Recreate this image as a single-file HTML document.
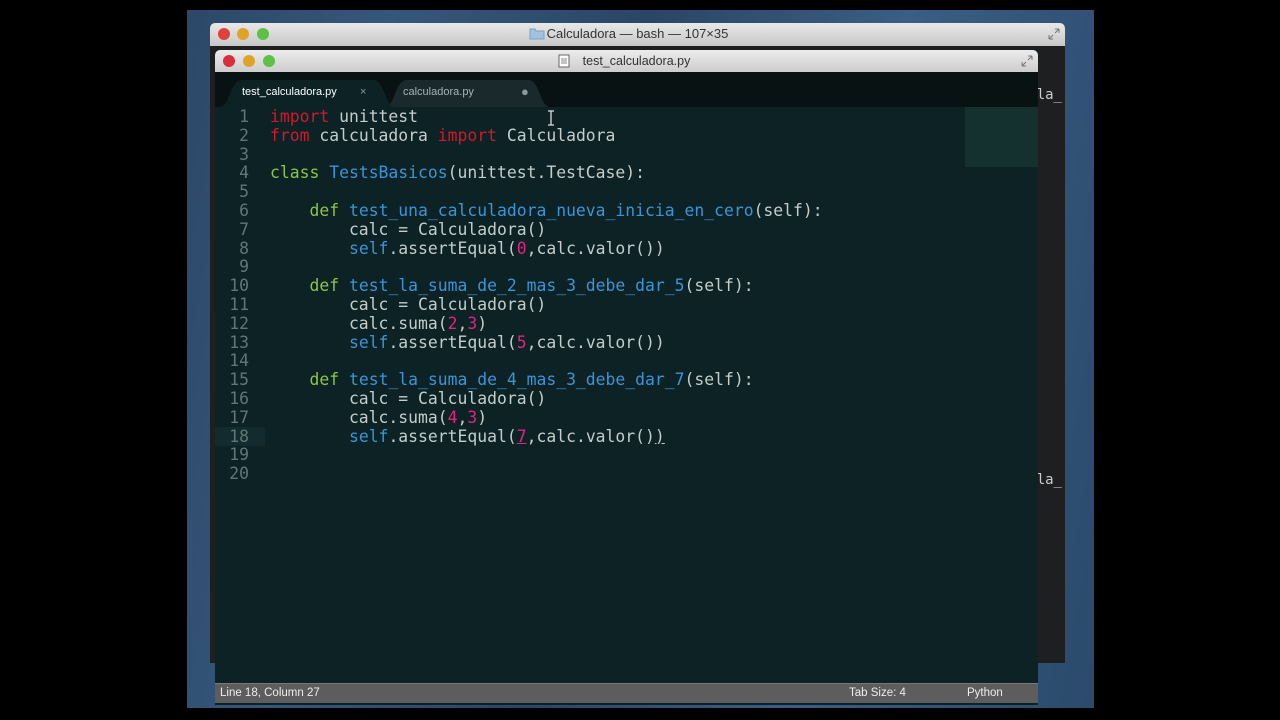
<!DOCTYPE html>
<html><head><meta charset="utf-8"><style>
*{margin:0;padding:0;box-sizing:border-box}
body{width:1280px;height:720px;background:#000;position:relative;overflow:hidden;font-family:"Liberation Sans",sans-serif}
.wall{position:absolute;left:187px;top:10px;width:907px;height:698px;background:linear-gradient(100deg,#2c4868 0%,#35577c 20%,#2a4666 45%,#3a5e84 70%,#2b4a6c 100%)}
.term{position:absolute;left:210px;top:23px;width:855px;height:640px;background:#1e1f20;border-radius:5px 5px 0 0}
.term .tb{height:23px;background:linear-gradient(#e8e8e8,#c8c8c8);border-radius:5px 5px 0 0;position:relative;font-size:13px;color:#333;text-align:center;line-height:22px}
.sub{position:absolute;left:215px;top:50px;width:823px;height:655px;background:#0c2225}
.sub .tb{height:22px;background:linear-gradient(#ececec,#cdcdcd);border-radius:5px 5px 0 0;font-size:12.5px;color:#333;text-align:center;line-height:22px;position:relative}
.dot{position:absolute;width:12px;height:12px;border-radius:50%;top:5px}
.tabs{position:absolute;top:22px;left:0;width:823px;height:35px;background:#081212}
.tab{position:absolute;top:8px;height:27px;font-size:11px;line-height:25px;padding-left:27px;color:#ccc}
.code{position:absolute;top:57px;left:0;width:823px;height:576px;font-family:"DejaVu Sans Mono","Liberation Mono",monospace;font-size:16.4px;line-height:19px;color:#c3cdca}
.ln{position:absolute;left:0;width:34px;text-align:right;color:#5f7876}
.l{position:absolute;left:55px;white-space:pre}
.k{color:#d8162a}.g{color:#8dc63f}.b{color:#3a95d8}.n{color:#e0247e}
.status{position:absolute;left:0;top:633px;width:823px;height:20px;background:#5d5d5d;border-top:1px solid #777;font-size:11.5px;color:#eee;line-height:19px}
</style></head><body>
<div class="wall"></div>
<div class="term">
 <div class="tb"><div class="dot" style="left:8px;background:#e0413a"></div><div class="dot" style="left:27px;background:#e0a32a"></div><div class="dot" style="left:47px;background:#5cc144"></div>
 <svg style="position:absolute;left:319px;top:4px" width="16" height="13"><path d="M1 2h5l1 2h8v8H1z" fill="#9ec3de" stroke="#7aa3c2"/></svg>Calculadora — bash — 107×35
 <svg style="position:absolute;right:4px;top:4px" width="14" height="14"><path d="M2 12l4-4M2 12v-4M2 12h4M12 2l-4 4M12 2v4M12 2h-4" stroke="#777" fill="none"/></svg></div>
 <div style="position:absolute;right:3px;top:64px;color:#ccc;font-family:'DejaVu Sans Mono',monospace;font-size:14px">la_</div>
 <div style="position:absolute;right:3px;top:449px;color:#ccc;font-family:'DejaVu Sans Mono',monospace;font-size:14px">la_</div>
</div>
<div class="sub">
 <div class="tb"><div class="dot" style="left:8px;top:5px;background:#d92e3c"></div><div class="dot" style="left:28px;top:5px;background:#e0a32a"></div><div class="dot" style="left:48px;top:5px;background:#5cc144"></div>
 <svg style="position:absolute;left:343px;top:4px" width="12" height="14"><rect x="1" y="1" width="10" height="12" fill="#fff" stroke="#666"/><path d="M3 5h6M3 7h6M3 9h6" stroke="#888"/></svg><span style="margin-left:20px">test_calculadora.py</span>
 <svg style="position:absolute;right:4px;top:4px" width="14" height="14"><path d="M2 12l4-4M2 12v-4M2 12h4M12 2l-4 4M12 2v4M12 2h-4" stroke="#777" fill="none"/></svg></div>
 <div class="tabs">
  <svg style="position:absolute;left:170px;top:8px" width="165" height="27"><path d="M0 27C10 27 10 0 22 0H143C155 0 155 27 165 27Z" fill="#1a2a2c"/></svg>
  <svg style="position:absolute;left:5px;top:8px" width="175" height="27"><path d="M0 27C10 27 10 0 22 0H153C165 0 165 27 175 27Z" fill="#0c2225"/></svg>
  <div class="tab" style="left:0;color:#fff">test_calculadora.py<span style="position:absolute;left:145px;color:#8a9a9a">×</span></div>
  <div class="tab" style="left:161px;color:#a8b2b2">calculadora.py<span style="position:absolute;left:145px;color:#8a9a9a;font-size:13px;top:-1px">●</span></div>
 </div>
 <div class="code">
  <div style="position:absolute;left:0;top:320px;width:50px;height:19px;background:#132b2e"></div>
  <div style="position:absolute;left:750px;top:0;width:73px;height:60px;background:#14302f"></div>
  <div class="ln" style="top:0">1</div><div class="l" style="top:0"><span class="k">import</span> unittest</div>
  <div class="ln" style="top:18.8px">2</div><div class="l" style="top:18.8px"><span class="k">from</span> calculadora <span class="k">import</span> Calculadora</div>
  <div class="ln" style="top:37.6px">3</div>
  <div class="ln" style="top:56.4px">4</div><div class="l" style="top:56.4px"><span class="g">class</span> <span class="b">TestsBasicos</span>(unittest.TestCase):</div>
  <div class="ln" style="top:75.2px">5</div>
  <div class="ln" style="top:94px">6</div><div class="l" style="top:94px">    <span class="g">def</span> <span class="b">test_una_calculadora_nueva_inicia_en_cero</span>(self):</div>
  <div class="ln" style="top:112.8px">7</div><div class="l" style="top:112.8px">        calc = Calculadora()</div>
  <div class="ln" style="top:131.6px">8</div><div class="l" style="top:131.6px">        <span class="b">self</span>.assertEqual(<span class="n">0</span>,calc.valor())</div>
  <div class="ln" style="top:150.4px">9</div>
  <div class="ln" style="top:169.2px">10</div><div class="l" style="top:169.2px">    <span class="g">def</span> <span class="b">test_la_suma_de_2_mas_3_debe_dar_5</span>(self):</div>
  <div class="ln" style="top:188px">11</div><div class="l" style="top:188px">        calc = Calculadora()</div>
  <div class="ln" style="top:206.8px">12</div><div class="l" style="top:206.8px">        calc.suma(<span class="n">2</span>,<span class="n">3</span>)</div>
  <div class="ln" style="top:225.6px">13</div><div class="l" style="top:225.6px">        <span class="b">self</span>.assertEqual(<span class="n">5</span>,calc.valor())</div>
  <div class="ln" style="top:244.4px">14</div>
  <div class="ln" style="top:263.2px">15</div><div class="l" style="top:263.2px">    <span class="g">def</span> <span class="b">test_la_suma_de_4_mas_3_debe_dar_7</span>(self):</div>
  <div class="ln" style="top:282px">16</div><div class="l" style="top:282px">        calc = Calculadora()</div>
  <div class="ln" style="top:300.8px">17</div><div class="l" style="top:300.8px">        calc.suma(<span class="n">4</span>,<span class="n">3</span>)</div>
  <div class="ln" style="top:319.6px">18</div><div class="l" style="top:319.6px">        <span class="b">self</span>.assertEqual(<span class="n" style="text-decoration:underline">7</span>,calc.valor()<span style="text-decoration:underline">)</span></div>
  <div class="ln" style="top:338.4px">19</div>
  <div class="ln" style="top:357.2px">20</div>
 </div>
 <svg style="position:absolute;left:332px;top:60px" width="8" height="16"><path d="M1 1h6M4 1v14M1 15h6" stroke="#ddd" stroke-width="1.3" fill="none"/></svg>
 <div class="status"><span style="position:absolute;left:5px">Line 18, Column 27</span><span style="position:absolute;left:634px">Tab Size: 4</span><span style="position:absolute;left:752px">Python</span></div>
</div>
</body></html>
